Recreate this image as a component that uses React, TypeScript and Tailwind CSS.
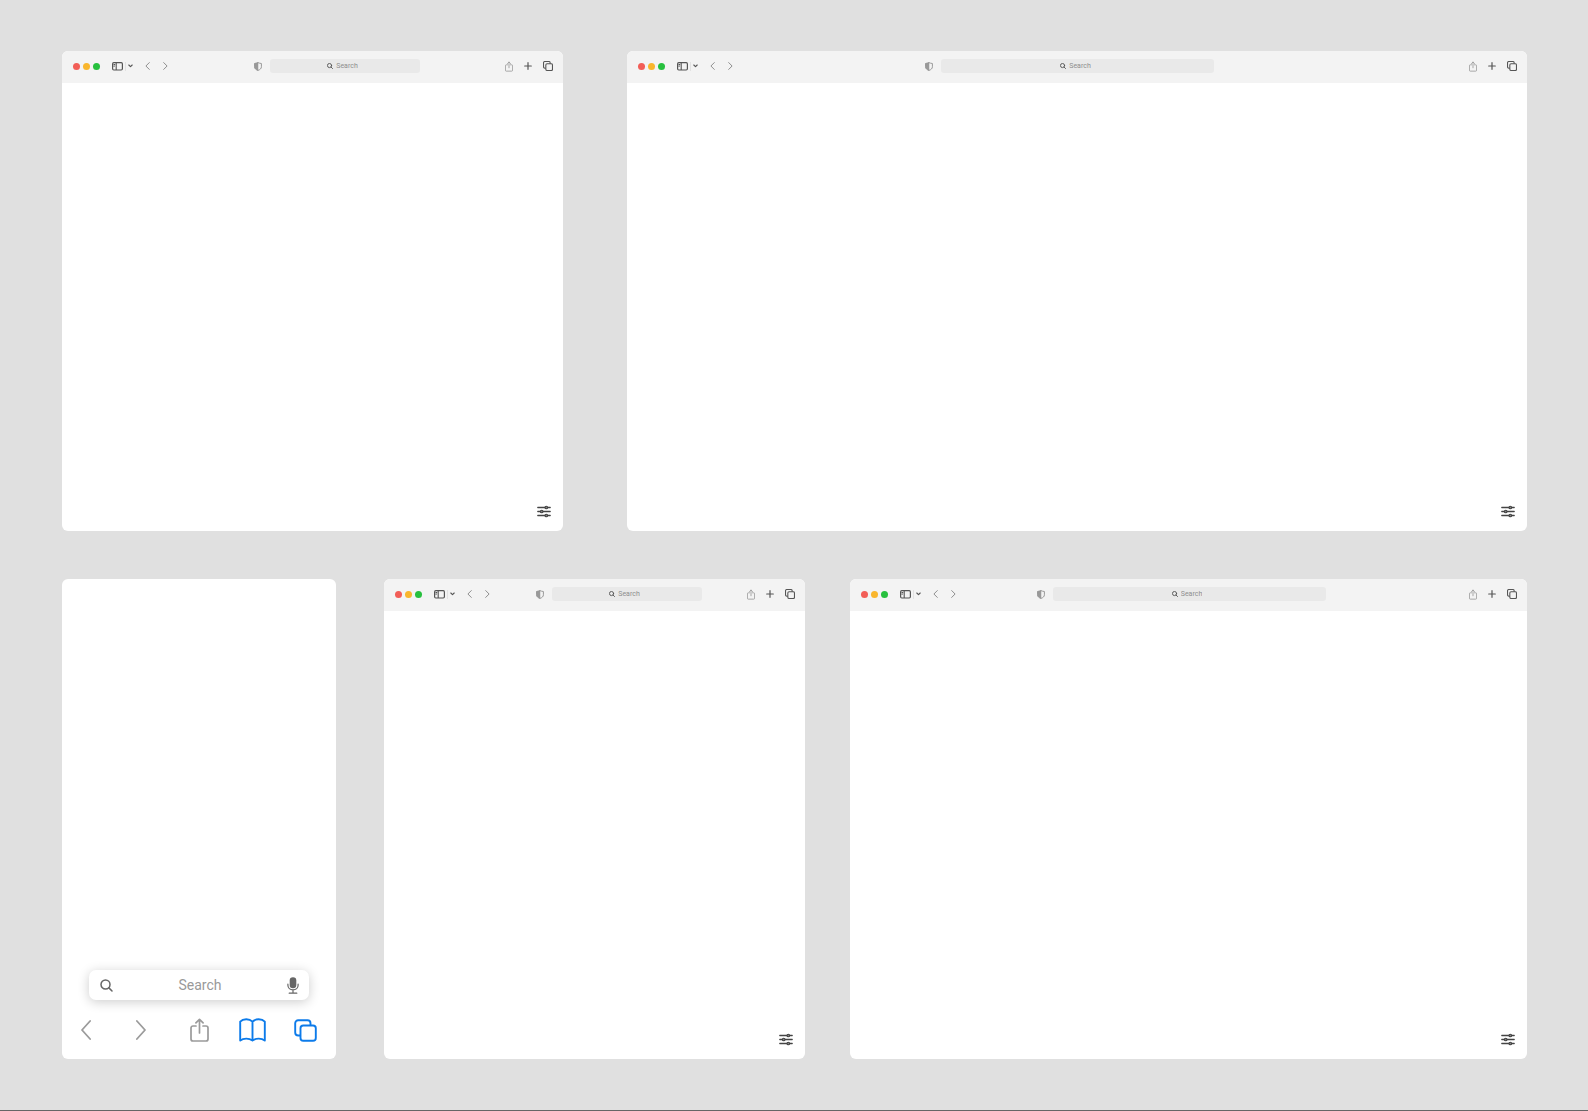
import type { ReactNode } from "react";

type IconProps = { className?: string };

const SidebarIcon = () => (
    <svg className="w-[11px] h-[9px]" viewBox="0 0 11 9" fill="none" stroke="currentColor">
        <rect x="0.6" y="0.7" width="9.8" height="7.3" rx="1.2" strokeWidth="1.2" />
        <path d="M4.200 1v7" strokeWidth="1.1" />
        <path d="M1.500 2.600h1.700M1.500 4.200h1.200" strokeWidth="1.1" />
    </svg>
);

const ChevronDown = () => (
    <svg className="w-[5px] h-[4px]" viewBox="0 0 5 4" fill="none" stroke="currentColor" strokeWidth="1.1" strokeLinecap="round" strokeLinejoin="round">
        <path d="M0.8 1l1.7 1.6L4.2 1" />
    </svg>
);

const ChevronLeft = ({ className }: IconProps) => (
    <svg className={className} viewBox="0 0 10 20" fill="none" stroke="currentColor" strokeWidth="1.8" strokeLinecap="round" strokeLinejoin="round">
        <path d="M9.100 1L1 10l8.100 9" />
    </svg>
);

const ChevronRight = ({ className }: IconProps) => (
    <svg className={className} viewBox="0 0 10 20" fill="none" stroke="currentColor" strokeWidth="1.8" strokeLinecap="round" strokeLinejoin="round">
        <path d="M0.900 1L9 10l-8.100 9" />
    </svg>
);

const SmallChevronLeft = () => (
    <svg className="w-[5px] h-[8px]" viewBox="0 0 5 8" fill="none" stroke="currentColor" strokeWidth="1" strokeLinecap="round" strokeLinejoin="round">
        <path d="M4.300 0.600L0.900 4l3.400 3.400" />
    </svg>
);

const SmallChevronRight = () => (
    <svg className="w-[5px] h-[8px]" viewBox="0 0 5 8" fill="none" stroke="currentColor" strokeWidth="1" strokeLinecap="round" strokeLinejoin="round">
        <path d="M0.700 0.600L4.100 4 0.700 7.400" />
    </svg>
);

const ShieldIcon = () => (
    <svg className="w-[8px] h-[9px]" viewBox="0 0 8 9" stroke="currentColor" strokeWidth="1" strokeLinejoin="round">
        <path d="M4 0.600c1 .5 2 .8 3.400.9v3.300C7.400 6.600 6 7.700 4 8.400 2 7.700.600 6.600.600 4.800V1.500C2 1.400 3 1.100 4 .6z" fill="none" />
        <path d="M4 0.600v7.800C2 7.700.600 6.600.600 4.800V1.500C2 1.400 3 1.100 4 .6z" fill="currentColor" strokeWidth="0.500" />
    </svg>
);

const SearchIcon = ({ className }: IconProps) => (
    <svg className={className} viewBox="0 0 13 13" fill="none" stroke="currentColor" strokeLinecap="round">
        <circle cx="5.500" cy="5.500" r="4.500" />
        <path d="M8.900 8.900L12 12" />
    </svg>
);

const ShareIcon = ({ className }: IconProps) => (
    <svg className={className} viewBox="0 0 19 24" fill="none" stroke="currentColor" strokeLinecap="round" strokeLinejoin="round">
        <path d="M6 8H3a2 2 0 0 0-2 2v11a2 2 0 0 0 2 2h13a2 2 0 0 0 2-2V10a2 2 0 0 0-2-2h-3" />
        <path d="M9.500 15V1.500M5.900 4.900l3.600-3.600 3.600 3.600" />
    </svg>
);

const PlusIcon = () => (
    <svg className="w-[8px] h-[8px]" viewBox="0 0 8 8" fill="none" stroke="currentColor" strokeWidth="1.200" strokeLinecap="round">
        <path d="M4 0.700v6.600M0.700 4h6.600" />
    </svg>
);

const TabsIcon = ({ className }: IconProps) => (
    <svg className={className} viewBox="0 0 23 23" fill="none" stroke="currentColor" strokeLinejoin="round">
        <rect x="6.500" y="6.500" width="15.300" height="15.300" rx="2.800" />
        <path d="M6.500 16.500H4.200A3 3 0 0 1 1.200 13.500V4.200a3 3 0 0 1 3-3h9.300a3 3 0 0 1 3 3v2.300" />
    </svg>
);

const BookIcon = () => (
    <svg className="w-[27px] h-[24px]" viewBox="0 0 27 24" fill="none" stroke="currentColor" strokeWidth="1.900" strokeLinejoin="round">
        <path d="M13.500 3.600C11.800 2 9.800 1.300 7.300 1.300S2.700 2 1.200 3.600v19c1.500-1.300 3.600-2 6.100-2s4.500.7 6.200 2c1.700-1.300 3.700-2 6.200-2s4.600.7 6.100 2v-19c-1.500-1.600-3.600-2.300-6.100-2.300s-4.500.7-6.200 2.300zM13.500 3.600v19" />
    </svg>
);

const MicIcon = () => (
    <svg className="w-[12px] h-[17px]" viewBox="0 0 12 17" fill="none" stroke="currentColor" strokeWidth="1.200" strokeLinecap="round">
        <rect x="2.700" y="0.200" width="6.600" height="11" rx="3.300" fill="currentColor" stroke="none" />
        <path d="M0.900 7.200v1c0 2.700 2.200 4.600 5.100 4.600s5.100-1.900 5.100-4.600v-1M6 12.800V16M2.200 16.200h7.600" />
    </svg>
);

const TuneIcon = () => (
    <svg className="w-[14px] h-[13px]" viewBox="0 0 14 13" fill="none" stroke="currentColor" strokeWidth="1.300" strokeLinecap="round">
        <path d="M0.800 2.500h12.400M0.800 6.500h12.400M0.800 10.500h12.400" />
        <g fill="#888" strokeWidth="1.100">
            <circle cx="9.300" cy="2.500" r="1.300" />
            <circle cx="4.700" cy="6.500" r="1.300" />
            <circle cx="9.300" cy="10.500" r="1.300" />
        </g>
    </svg>
);

const IconButton = ({ label, children }: { label: string; children: ReactNode }) => (
    <button type="button" aria-label={label} className="flex shrink-0 cursor-pointer">
        {children}
    </button>
);

type BrowserProps = {
    className: string;
    wide?: boolean;
};

const Browser = ({ className, wide = false }: BrowserProps) => {
    return (
        <section className={`flex min-w-0 flex-col overflow-hidden rounded-md bg-white ${className}`}>
            <header className="flex items-start justify-between bg-[#f3f3f3] pt-2 pb-[10px] pl-[11px] pr-[10px] text-[#555]">
                <div className={`flex h-[14px] items-center ${wide ? "flex-1" : ""}`}>
                    <div className="flex gap-[3px]">
                        <span className="size-[7px] rounded-full bg-[#f25e57]" />
                        <span className="size-[7px] rounded-full bg-[#f9b62d]" />
                        <span className="size-[7px] rounded-full bg-[#27c03e]" />
                    </div>
                    <div className="ml-3 flex items-center gap-[2px]">
                        <IconButton label="Sidebar"><SidebarIcon /></IconButton>
                        <span className="h-[9px] w-px bg-[#e2e2e2]" />
                        <IconButton label="Tab groups"><ChevronDown /></IconButton>
                    </div>
                    <div className="ml-3 flex gap-[13px] text-[#8e8e8e]">
                        <IconButton label="Back"><SmallChevronLeft /></IconButton>
                        <IconButton label="Forward"><SmallChevronRight /></IconButton>
                    </div>
                    {wide && (
                        <div className="mr-2 ml-auto text-[#999]">
                            <IconButton label="Privacy report"><ShieldIcon /></IconButton>
                        </div>
                    )}
                </div>
                <div className="flex items-center gap-2">
                    {!wide && (
                        <div className="text-[#999]">
                            <IconButton label="Privacy report"><ShieldIcon /></IconButton>
                        </div>
                    )}
                    <label className={`flex h-[14px] items-center justify-center gap-[3px] rounded-[3px] bg-[#e9e9e9] pr-1 ${wide ? "w-[273px]" : "w-[150px]"}`}>
                        <SearchIcon className="size-[6px] shrink-0 stroke-2" />
                        <input
                            type="text" aria-label="Search" placeholder="Search"
                            className="field-sizing-content text-[7px] leading-[10px] outline-none placeholder:text-[#8e8e8e]"
                        />
                    </label>
                </div>
                <div className={`flex h-[14px] items-center justify-end gap-[11px] ${wide ? "flex-1" : ""}`}>
                    <div className="text-[#999]">
                        <IconButton label="Share"><ShareIcon className="h-[11px] w-[8px] stroke-2" /></IconButton>
                    </div>
                    <IconButton label="New tab"><PlusIcon /></IconButton>
                    <IconButton label="Tabs"><TabsIcon className="size-[10px] stroke-[2.5]" /></IconButton>
                </div>
            </header>
            <div className="flex min-h-[448px] grow items-end justify-end pr-3 pb-[13px] text-[#444]">
                <IconButton label="Settings"><TuneIcon /></IconButton>
            </div>
        </section>
    );
};

const Phone = ({ className }: { className: string }) => {
    return (
        <section className={`flex min-h-[480px] min-w-0 flex-col justify-end rounded-md bg-white pb-[17px] ${className}`}>
            <label className="mx-[27px] flex h-[30px] items-center rounded-[7px] bg-white pr-[10px] pl-[11px] shadow-[0_2px_12px_rgba(0,0,0,0.2)]">
                <SearchIcon className="size-[13px] shrink-0 stroke-[1.5] text-[#666]" />
                <input
                    type="text" aria-label="Search" placeholder="Search"
                    className="w-0 grow text-center text-[14px] leading-5 outline-none placeholder:text-[#999]"
                />
                <IconButton label="Dictate"><span className="text-[#666]"><MicIcon /></span></IconButton>
            </label>
            <nav className="mt-[18px] grid grid-cols-[1fr_auto_1fr] items-center px-[19px] text-[#9b9b9b]">
                <div className="flex justify-between pr-11">
                    <IconButton label="Back"><ChevronLeft className="h-5 w-[10px]" /></IconButton>
                    <IconButton label="Forward"><ChevronRight className="h-5 w-[10px]" /></IconButton>
                </div>
                <IconButton label="Share"><ShareIcon className="h-6 w-[19px] stroke-[1.7]" /></IconButton>
                <div className="flex items-center justify-between pl-[30px] text-[#0c7bea]">
                    <IconButton label="Bookmarks"><BookIcon /></IconButton>
                    <IconButton label="Tabs"><TabsIcon className="size-[23px] stroke-[1.9]" /></IconButton>
                </div>
            </nav>
        </section>
    );
};

const App = () => {
    return (
        <main className="flex min-h-screen flex-col gap-12 border-b border-[#666] bg-[#e0e0e0] pt-[51px] pr-[61px] pb-[51px] pl-[62px] font-['Roboto',sans-serif]">
            <div className="flex gap-[64px]">
                <Browser className="flex-[501]" />
                <Browser className="flex-[900]" wide />
            </div>
            <div className="flex">
                <Phone className="mr-12 flex-[274]" />
                <Browser className="mr-[45px] flex-[421]" />
                <Browser className="flex-[677]" wide />
            </div>
        </main>
    );
};

export default App;
